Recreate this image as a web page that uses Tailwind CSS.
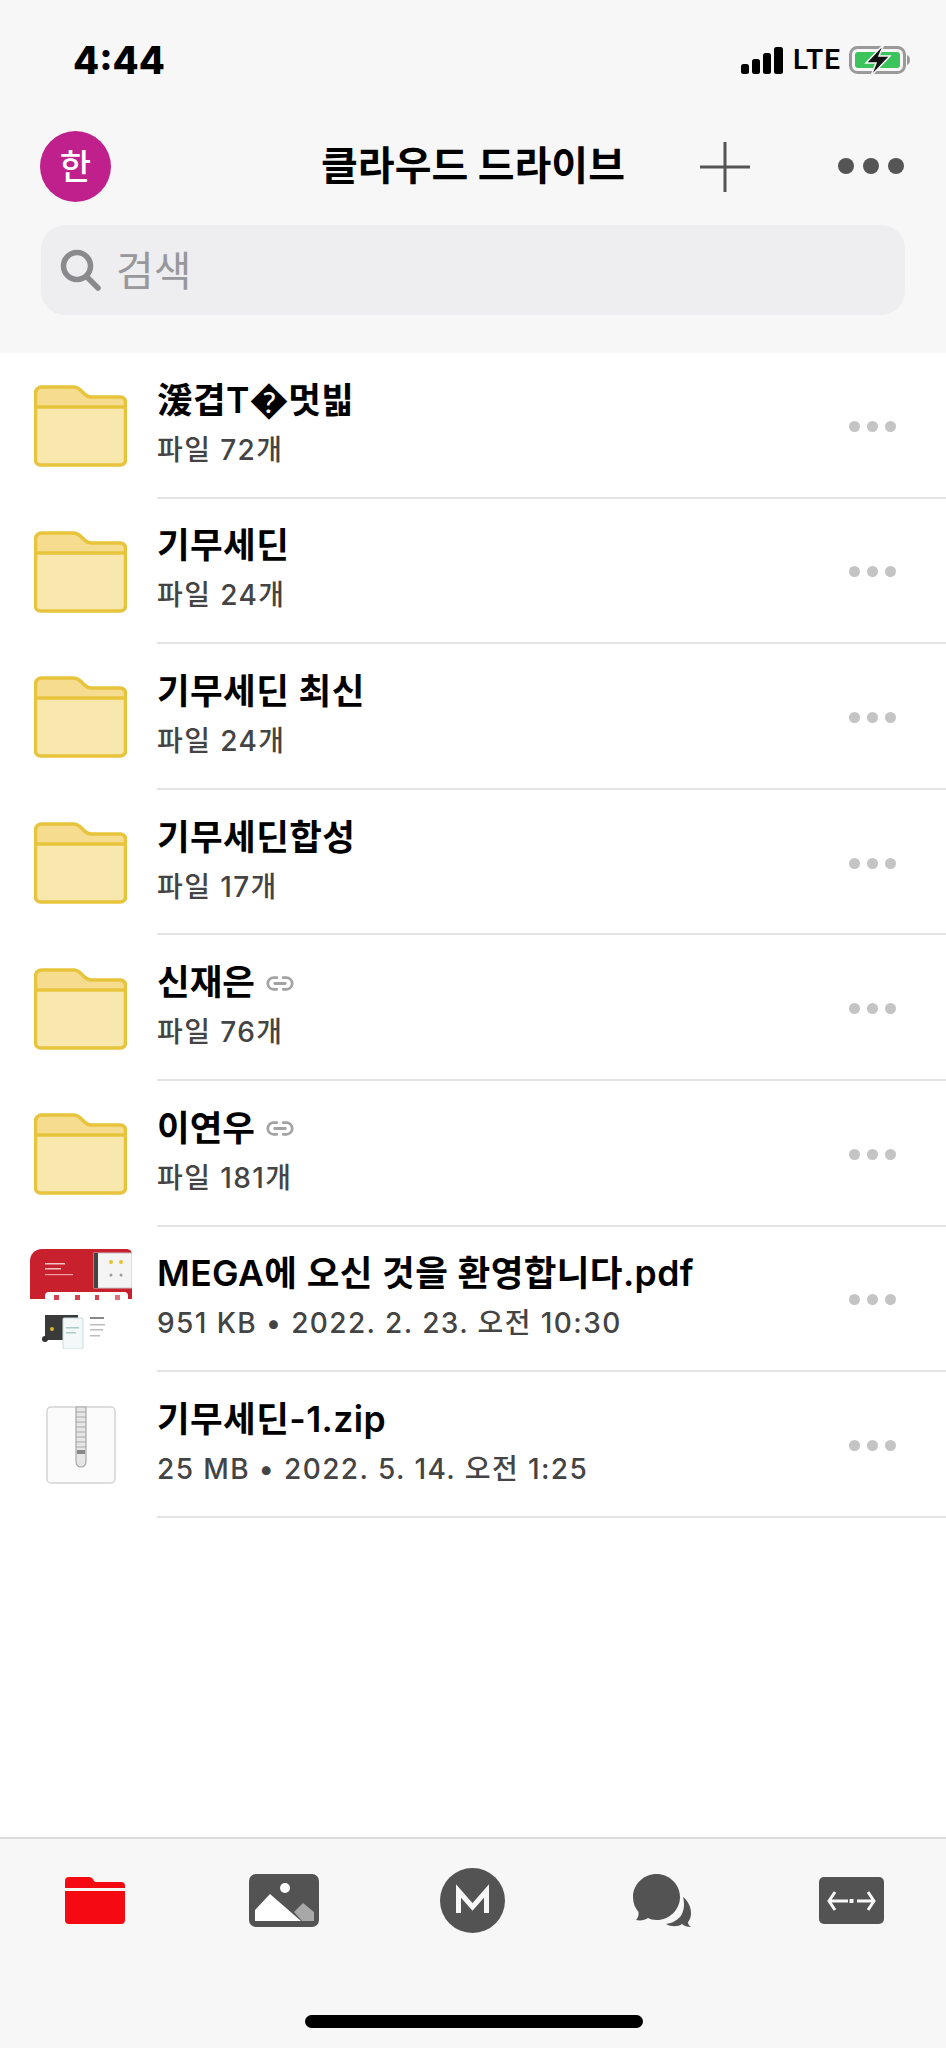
<!DOCTYPE html>
<html lang="ko">

<head>
    <meta charset="UTF-8">
    <meta name="viewport" content="width=device-width, initial-scale=1.0">
    <title>클라우드 드라이브</title>
    <script src="https://cdn.jsdelivr.net/npm/@tailwindcss/browser@4"></script>
</head>

<body class="bg-white font-['Inter','Noto_Sans_CJK_KR',sans-serif] text-black">
    <svg class="hidden">
        <symbol id="folder" viewBox="0 0 93 82">
            <path d="M1.5 21V8a6 6 0 0 1 6-6h32c4 0 6 2 8 4l3 3c2 2 4 3 7 3h29a5 5 0 0 1 5 5v5z" fill="#f5dc8e" />
            <path d="M1.5 22h90v53a5 5 0 0 1-5 5h-80a5 5 0 0 1-5-5z" fill="#f9e8ae" />
            <path d="M1.5 22V8a6 6 0 0 1 6-6h32c4 0 6 2 8 4l3 3c2 2 4 3 7 3h29a5 5 0 0 1 5 5v58a5 5 0 0 1-5 5h-80a5 5 0 0 1-5-5zH91.500" fill="none" stroke="#e8c33c" stroke-width="3.500" />
        </symbol>
        <symbol id="link" viewBox="0 0 28 16">
            <path d="M11 2.500H8a5.500 5.500 0 0 0 0 11h3M17 2.500h3a5.500 5.500 0 0 1 0 11h-3M9 8h10" fill="none" stroke="#a3a3a3" stroke-width="2.600" stroke-linecap="round" />
        </symbol>
    </svg>

    <header class="h-[353px] bg-[#f7f7f8]">
        <div class="flex h-[116px] items-start justify-between pl-[73px] pr-[36px] pt-[36px]">
            <span class="mt-[1px] text-[38px] leading-[46px] font-extrabold">4:44</span>
            <div class="mt-[8px] flex items-center">
                <svg width="42" height="27" viewBox="0 0 42 27" fill="#000">
                    <rect x="0" y="17" width="8" height="10" rx="2.500" />
                    <rect x="11" y="12" width="8" height="15" rx="2.500" />
                    <rect x="22" y="6" width="8" height="21" rx="2.500" />
                    <rect x="33" y="0" width="9" height="27" rx="2.500" />
                </svg>
                <span class="ml-[10px] text-[28px] leading-[28px] font-semibold font-['Roboto',sans-serif] tracking-[1px]">LTE</span>
                <svg class="ml-[8px]" width="61" height="32" viewBox="0 0 61 32">
                    <rect x="1.500" y="3.500" width="54" height="25" rx="7" fill="none" stroke="#9a9a9a" stroke-width="3" />
                    <rect x="6" y="8" width="45" height="16" rx="3" fill="#3cc45c" />
                    <path d="M58 11c2 .5 3 2.500 3 5s-1 4.500-3 5z" fill="#9a9a9a" />
                    <path d="M35 0 17 19h10l-5 13 19-20H30z" fill="#111" stroke="#f7f7f8" stroke-width="1.500" />
                </svg>
            </div>
        </div>
        <div class="relative flex h-[100px] items-center justify-between pl-[40px] pr-[42px]">
            <div class="flex h-[71px] w-[71px] items-center justify-center rounded-full bg-[#c0208c] text-[34px] font-medium text-white">한</div>
            <h1 class="absolute left-[300px] w-[346px] text-center text-[40px] leading-[48px] font-bold whitespace-nowrap">클라우드 드라이브</h1>
            <div class="flex items-center gap-[88px]">
                <svg class="mt-[1px]" width="50" height="50" viewBox="0 0 50 50" fill="none" stroke="#555" stroke-width="3">
                    <path d="M25 0v50M0 25h50" />
                </svg>
                <div class="flex gap-[9px]">
                    <span class="h-[16px] w-[16px] rounded-full bg-[#555]"></span>
                    <span class="h-[16px] w-[16px] rounded-full bg-[#555]"></span>
                    <span class="h-[16px] w-[16px] rounded-full bg-[#555]"></span>
                </div>
            </div>
        </div>
        <div class="mx-[41px] mt-[9px] flex h-[90px] items-center rounded-[24px] bg-[#eeeef0] pl-[19px]">
            <svg width="42" height="42" viewBox="0 0 42 42" fill="none" stroke="#8a8a8e" stroke-width="5.500" stroke-linecap="round">
                <circle cx="17" cy="17" r="13.500" />
                <path d="M27 28l11 11" />
            </svg>
            <span class="ml-[14px] mt-[2px] text-[41px] leading-[48px] font-normal text-[#98989c]">검색</span>
        </div>
    </header>

    <main class="h-[1484px]">
        <div class="flex h-[145.6px] items-center">
            <svg class="ml-[34px] mt-[1px] h-[82px] w-[93px]"><use href="#folder" /></svg>
            <div class="ml-[30px] flex h-full flex-1 items-center justify-between border-b-2 border-[#e3e3e6] pr-[50px]">
                <div class="pb-[4px]">
                    <p class="h-[44px] text-[35.500px] leading-[44px] font-semibold tracking-[0.400px]">湲겹T<span class="text-[38px] leading-none">�</span>멋빏</p>
                    <p class="mt-[10px] text-[28px] leading-[34px] font-medium tracking-[1.400px] text-[#444]">파일 72개</p>
                </div>
                <div class="mt-[3px] flex gap-[7px]">
                    <span class="h-[11px] w-[11px] rounded-full bg-[#c4c4c4]"></span>
                    <span class="h-[11px] w-[11px] rounded-full bg-[#c4c4c4]"></span>
                    <span class="h-[11px] w-[11px] rounded-full bg-[#c4c4c4]"></span>
                </div>
            </div>
        </div>
        <div class="flex h-[145.6px] items-center">
            <svg class="ml-[34px] mt-[1px] h-[82px] w-[93px]"><use href="#folder" /></svg>
            <div class="ml-[30px] flex h-full flex-1 items-center justify-between border-b-2 border-[#e3e3e6] pr-[50px]">
                <div class="pb-[4px]">
                    <p class="text-[35.500px] leading-[44px] font-semibold tracking-[0.400px]">기무세딘</p>
                    <p class="mt-[10px] text-[28px] leading-[34px] font-medium tracking-[1.400px] text-[#444]">파일 24개</p>
                </div>
                <div class="mt-[3px] flex gap-[7px]">
                    <span class="h-[11px] w-[11px] rounded-full bg-[#c4c4c4]"></span>
                    <span class="h-[11px] w-[11px] rounded-full bg-[#c4c4c4]"></span>
                    <span class="h-[11px] w-[11px] rounded-full bg-[#c4c4c4]"></span>
                </div>
            </div>
        </div>
        <div class="flex h-[145.6px] items-center">
            <svg class="ml-[34px] mt-[1px] h-[82px] w-[93px]"><use href="#folder" /></svg>
            <div class="ml-[30px] flex h-full flex-1 items-center justify-between border-b-2 border-[#e3e3e6] pr-[50px]">
                <div class="pb-[4px]">
                    <p class="text-[35.500px] leading-[44px] font-semibold tracking-[0.400px]">기무세딘 최신</p>
                    <p class="mt-[10px] text-[28px] leading-[34px] font-medium tracking-[1.400px] text-[#444]">파일 24개</p>
                </div>
                <div class="mt-[3px] flex gap-[7px]">
                    <span class="h-[11px] w-[11px] rounded-full bg-[#c4c4c4]"></span>
                    <span class="h-[11px] w-[11px] rounded-full bg-[#c4c4c4]"></span>
                    <span class="h-[11px] w-[11px] rounded-full bg-[#c4c4c4]"></span>
                </div>
            </div>
        </div>
        <div class="flex h-[145.6px] items-center">
            <svg class="ml-[34px] mt-[1px] h-[82px] w-[93px]"><use href="#folder" /></svg>
            <div class="ml-[30px] flex h-full flex-1 items-center justify-between border-b-2 border-[#e3e3e6] pr-[50px]">
                <div class="pb-[4px]">
                    <p class="text-[35.500px] leading-[44px] font-semibold tracking-[0.400px]">기무세딘합성</p>
                    <p class="mt-[10px] text-[28px] leading-[34px] font-medium tracking-[1.400px] text-[#444]">파일 17개</p>
                </div>
                <div class="mt-[3px] flex gap-[7px]">
                    <span class="h-[11px] w-[11px] rounded-full bg-[#c4c4c4]"></span>
                    <span class="h-[11px] w-[11px] rounded-full bg-[#c4c4c4]"></span>
                    <span class="h-[11px] w-[11px] rounded-full bg-[#c4c4c4]"></span>
                </div>
            </div>
        </div>
        <div class="flex h-[145.6px] items-center">
            <svg class="ml-[34px] mt-[1px] h-[82px] w-[93px]"><use href="#folder" /></svg>
            <div class="ml-[30px] flex h-full flex-1 items-center justify-between border-b-2 border-[#e3e3e6] pr-[50px]">
                <div class="pb-[4px]">
                    <p class="flex items-center text-[35.500px] leading-[44px] font-semibold">신재은<svg class="ml-[10px] h-[17px] w-[30px]"><use href="#link" /></svg></p>
                    <p class="mt-[10px] text-[28px] leading-[34px] font-medium tracking-[1.400px] text-[#444]">파일 76개</p>
                </div>
                <div class="mt-[3px] flex gap-[7px]">
                    <span class="h-[11px] w-[11px] rounded-full bg-[#c4c4c4]"></span>
                    <span class="h-[11px] w-[11px] rounded-full bg-[#c4c4c4]"></span>
                    <span class="h-[11px] w-[11px] rounded-full bg-[#c4c4c4]"></span>
                </div>
            </div>
        </div>
        <div class="flex h-[145.6px] items-center">
            <svg class="ml-[34px] mt-[1px] h-[82px] w-[93px]"><use href="#folder" /></svg>
            <div class="ml-[30px] flex h-full flex-1 items-center justify-between border-b-2 border-[#e3e3e6] pr-[50px]">
                <div class="pb-[4px]">
                    <p class="flex items-center text-[35.500px] leading-[44px] font-semibold">이연우<svg class="ml-[10px] h-[17px] w-[30px]"><use href="#link" /></svg></p>
                    <p class="mt-[10px] text-[28px] leading-[34px] font-medium tracking-[1.400px] text-[#444]">파일 181개</p>
                </div>
                <div class="mt-[3px] flex gap-[7px]">
                    <span class="h-[11px] w-[11px] rounded-full bg-[#c4c4c4]"></span>
                    <span class="h-[11px] w-[11px] rounded-full bg-[#c4c4c4]"></span>
                    <span class="h-[11px] w-[11px] rounded-full bg-[#c4c4c4]"></span>
                </div>
            </div>
        </div>
        <div class="flex h-[145.6px] items-center">
            <svg class="ml-[30px] h-[100px] w-[102px] blur-[0.6px]" viewBox="0 0 102 100">
                <path d="M0 50V12C0 5 5 0 12 0h84c4 0 6 2 6 6v44z" fill="#c8202c" />
                <rect x="15" y="14" width="20" height="1.500" fill="#f4c4c8" />
                <rect x="15" y="19" width="16" height="1.500" fill="#f4c4c8" />
                <rect x="15" y="25" width="28" height="1.200" fill="#eea0a6" />
                <rect x="64" y="4" width="38" height="35" fill="#f4f4f4" stroke="#c4c4c4" />
                <rect x="64" y="4" width="4" height="35" fill="#444" />
                <circle cx="81" cy="13" r="2" fill="#e8c030" />
                <circle cx="91" cy="13" r="2" fill="#e8c030" />
                <circle cx="81" cy="26" r="1.500" fill="#999" />
                <circle cx="91" cy="26" r="1.500" fill="#999" />
                <rect x="15" y="43" width="83" height="15" rx="4" fill="#fff" />
                <rect x="24" y="46" width="5" height="5" fill="#d84050" />
                <rect x="45" y="46" width="5" height="5" fill="#d84050" />
                <rect x="65" y="46" width="4" height="5" fill="#d84050" />
                <rect x="85" y="46" width="5" height="5" fill="#e07080" />
                <rect x="15" y="66" width="33" height="25" fill="#3a3a3a" />
                <rect x="33" y="69" width="20" height="31" rx="1" fill="#f4f8f8" stroke="#c8dcdc" />
                <rect x="36" y="78" width="13" height="1.500" fill="#a8ccc8" />
                <rect x="36" y="83" width="10" height="1.500" fill="#a8ccc8" />
                <circle cx="22" cy="80" r="2" fill="#d8b830" />
                <circle cx="15" cy="90" r="3" fill="#333" />
                <rect x="60" y="68" width="14" height="2" fill="#888" />
                <rect x="60" y="75" width="15" height="1.500" fill="#bbb" />
                <rect x="60" y="80" width="13" height="1.500" fill="#bbb" />
                <rect x="60" y="86" width="10" height="1.500" fill="#bbb" />
            </svg>
            <div class="ml-[25px] flex h-full flex-1 items-center justify-between border-b-2 border-[#e3e3e6] pr-[50px]">
                <div class="pb-[4px]">
                    <p class="text-[35.500px] leading-[44px] font-semibold tracking-[0.400px]">MEGA에 오신 것을 환영합니다.pdf</p>
                    <p class="mt-[10px] text-[28px] leading-[34px] font-medium tracking-[1.400px] text-[#444]">951 KB • 2022. 2. 23. 오전 10:30</p>
                </div>
                <div class="mt-[3px] flex gap-[7px]">
                    <span class="h-[11px] w-[11px] rounded-full bg-[#c4c4c4]"></span>
                    <span class="h-[11px] w-[11px] rounded-full bg-[#c4c4c4]"></span>
                    <span class="h-[11px] w-[11px] rounded-full bg-[#c4c4c4]"></span>
                </div>
            </div>
        </div>
        <div class="flex h-[145.6px] items-center">
            <svg class="ml-[46px] h-[78px] w-[70px]" viewBox="0 0 70 78">
                <rect x="1" y="1" width="68" height="76" rx="4" fill="#fbfbfb" stroke="#d4d4d4" stroke-width="1.500" />
                <path d="M30 1h10v55a5 5 0 0 1-10 0z" fill="#e6e6e6" stroke="#a8a8a8" stroke-width="1.200" />
                <path d="M30 6h10M30 11h10M30 16h10M30 21h10M30 26h10M30 31h10M30 36h10M30 41h10" stroke="#a8a8a8" stroke-width="1.200" />
                <rect x="31" y="44" width="8" height="4" fill="#888" />
            </svg>
            <div class="ml-[41px] flex h-full flex-1 items-center justify-between border-b-2 border-[#e3e3e6] pr-[50px]">
                <div class="pb-[4px]">
                    <p class="text-[35.500px] leading-[44px] font-semibold tracking-[0.400px]">기무세딘-1.zip</p>
                    <p class="mt-[10px] text-[28px] leading-[34px] font-medium tracking-[1.400px] text-[#444]">25 MB • 2022. 5. 14. 오전 1:25</p>
                </div>
                <div class="mt-[3px] flex gap-[7px]">
                    <span class="h-[11px] w-[11px] rounded-full bg-[#c4c4c4]"></span>
                    <span class="h-[11px] w-[11px] rounded-full bg-[#c4c4c4]"></span>
                    <span class="h-[11px] w-[11px] rounded-full bg-[#c4c4c4]"></span>
                </div>
            </div>
        </div>
    </main>

    <footer class="relative h-[211px] border-t-2 border-[#dcdcdc] bg-[#f7f7f8]">
        <nav class="grid h-[94px] grid-cols-5 items-end">
            <div class="flex h-[65px] items-center justify-center">
                <svg width="60" height="47" viewBox="0 0 60 47">
                    <path d="M0 11V4a4 4 0 0 1 4-4h20c2 0 3 1 4 2l1 2c1 1 2 1 3 1h24a4 4 0 0 1 4 4v2z" fill="#f50a14" />
                    <path d="M0 14h60v29a4 4 0 0 1-4 4H4a4 4 0 0 1-4-4z" fill="#f50a14" />
                </svg>
            </div>
            <div class="flex h-[65px] items-center justify-center">
                <svg width="70" height="53" viewBox="0 0 70 53">
                    <rect width="70" height="53" rx="7" fill="#535353" />
                    <ellipse cx="36" cy="14" rx="5" ry="5" fill="#fff" />
                    <path d="M6 47V36L21 20l31 27z" fill="#fff" />
                    <path d="M45 38l9-9 11 9v9H53z" fill="#a8a8a8" />
                </svg>
            </div>
            <div class="flex h-[65px] items-center justify-center">
                <svg width="65" height="65" viewBox="0 0 65 65">
                    <circle cx="32.500" cy="32.500" r="32.500" fill="#535353" />
                    <path d="M18.500 45V23L32.500 39 46.500 23V45" fill="none" stroke="#f7f7f8" stroke-width="5" />
                </svg>
            </div>
            <div class="flex h-[65px] items-center justify-center">
                <svg width="58" height="53" viewBox="0 0 58 53" fill="#535353">
                    <path d="M23.500 0C36 0 47 10 47 23 47 36 36 46 24 46 20 46 17 45 15 44 12 46 8 47 3 46 5 44 6 41 5.500 38 2 34 0 29 0 23 0 10 11 0 23.500 0Z" />
                    <path d="M50 23C55 27 58 33 58 39 58 44 56 47 55 48 55 50 56 52 58 53 54 53 51 52 49 50 45 53 38 53 33 50 40 49 44 46 47 43 51 38 52 30 50 23Z" />
                </svg>
            </div>
            <div class="flex h-[65px] items-center justify-center">
                <svg width="65" height="47" viewBox="0 0 65 47">
                    <rect width="65" height="47" rx="5" fill="#535353" />
                    <path d="M16 15l-6 9 6 9M10 24h19M49 15l6 9-6 9M38 24h17" fill="none" stroke="#f7f7f8" stroke-width="3" />
                    <rect x="30.500" y="22" width="4" height="4" fill="#f7f7f8" />
                </svg>
            </div>
        </nav>
        <div class="absolute top-[176px] left-[305px] h-[13px] w-[338px] rounded-full bg-black"></div>
    </footer>
</body>

</html>
